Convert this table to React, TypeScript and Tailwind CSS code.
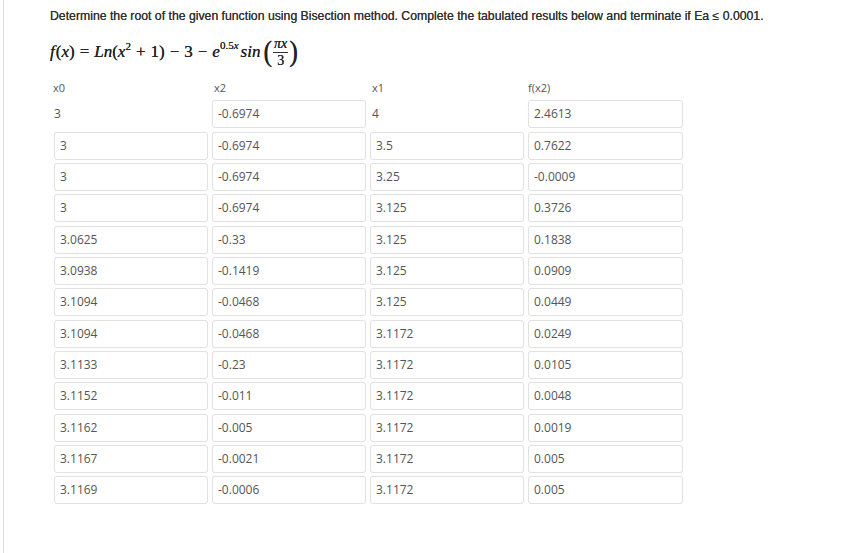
import React from "react";

const rows: string[][] = [
  ["3", "-0.6974", "4", "2.4613"],
  ["3", "-0.6974", "3.5", "0.7622"],
  ["3", "-0.6974", "3.25", "-0.0009"],
  ["3", "-0.6974", "3.125", "0.3726"],
  ["3.0625", "-0.33", "3.125", "0.1838"],
  ["3.0938", "-0.1419", "3.125", "0.0909"],
  ["3.1094", "-0.0468", "3.125", "0.0449"],
  ["3.1094", "-0.0468", "3.1172", "0.0249"],
  ["3.1133", "-0.23", "3.1172", "0.0105"],
  ["3.1152", "-0.011", "3.1172", "0.0048"],
  ["3.1162", "-0.005", "3.1172", "0.0019"],
  ["3.1167", "-0.0021", "3.1172", "0.005"],
  ["3.1169", "-0.0006", "3.1172", "0.005"],
];

function Box({ v }: { v: string }) {
  return (
    <div className="h-[28px] flex items-center pl-[5px] border border-[#e2e2e2] rounded-[3px] bg-white text-[12px] text-[#555] shadow-[0_0_1px_rgba(0,0,0,0.06)]">
      {v}
    </div>
  );
}

function Plain({ v, pad }: { v: string; pad?: boolean }) {
  return (
    <div className={pad ? "h-[28px] flex items-center text-[12px] text-[#555] pl-[2px]" : "h-[28px] flex items-center text-[12px] text-[#555]"}>
      {v}
    </div>
  );
}

export default function App() {
  return (
    <div className="w-[849px] h-[553px] bg-white overflow-hidden">
      <div className="ml-[3px] h-full border-l border-[#dcdcdc] pl-[46px] pt-[9px]" style={{ fontFamily: '"Open Sans", sans-serif' }}>
        <div className="text-[12.25px] leading-[14px] text-[#333] [text-shadow:0_0_0.2px_#333]" style={{ fontFamily: '"Liberation Sans", Arial, sans-serif' }}>
          Determine the root of the given function using Bisection method. Complete the tabulated results below and terminate if Ea ≤ 0.0001.
        </div>
        <div className="mt-[13px] h-[32px] flex items-center text-[17px] text-[#222] [text-shadow:0_0_0.6px_#222]" style={{ fontFamily: '"Liberation Serif", "DejaVu Serif", serif' }}>
          <span className="italic">f</span>
          <span className="ml-[1px]">(</span>
          <span className="italic">x</span>
          <span>)</span>
          <span className="mx-[5px]">=</span>
          <span className="italic">Ln</span>
          <span>(</span>
          <span className="italic">x</span>
          <sup className="text-[11px] -top-[6px]">2</sup>
          <span className="mx-[5px]">+</span>
          <span>1)</span>
          <span className="mx-[5px]">−</span>
          <span>3</span>
          <span className="mx-[5px]">−</span>
          <span className="italic">e</span>
          <sup className="text-[11px] -top-[7px]">
            0.5<span className="italic">x</span>
          </sup>
          <span className="italic ml-[2px]">sin</span>
          <span className="ml-[3px] text-[26px] leading-none scale-y-110">(</span>
          <span className="inline-flex flex-col items-center leading-none text-[14px] mx-[1px]">
            <span className="italic border-b border-[#333] px-[1px] pb-[1px]">πx</span>
            <span className="pt-[1px]">3</span>
          </span>
          <span className="text-[26px] leading-none scale-y-110">)</span>
        </div>
        <div className="ml-[4px] mt-[14px] grid grid-cols-[154px_154px_154px_155px] gap-x-[4px] gap-y-[3.33px]">
          <div className="text-[11px] text-[#555] h-[15px] leading-[12px] -ml-[1px]">x0</div>
          <div className="text-[11px] text-[#555] h-[15px] leading-[12px] pl-[2px]">x2</div>
          <div className="text-[11px] text-[#555] h-[15px] leading-[12px] pl-[2px]">x1</div>
          <div className="text-[11px] text-[#555] h-[15px] leading-[12px]">f(x2)</div>
          {rows.map((r, i) =>
            r.map((v, j) =>
              i === 0 && (j === 0 || j === 2) ? (
                <Plain key={`${i}-${j}`} v={v} pad={j === 2} />
              ) : (
                <Box key={`${i}-${j}`} v={v} />
              )
            )
          )}
        </div>
      </div>
    </div>
  );
}
